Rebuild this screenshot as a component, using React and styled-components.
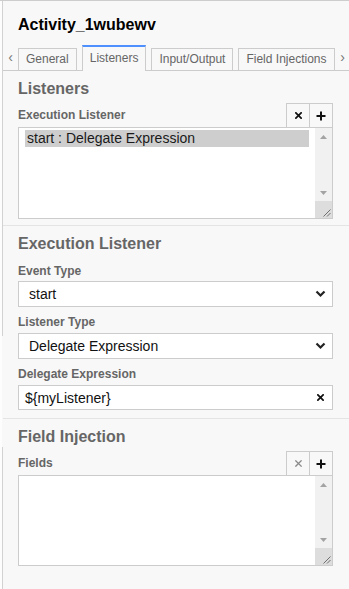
import styled, { createGlobalStyle } from "styled-components";

const GlobalStyle = createGlobalStyle`
  html, body {
    margin: 0;
    padding: 0;
    background: #f8f8f8;
  }
  body {
    font-family: "Liberation Sans", Arial, sans-serif;
  }
`;

const Page = styled.div`
  display: flex;
  width: 349px;
  height: 589px;
  border-top: 1px solid #cdcdcd;
  box-sizing: border-box;
  overflow: hidden;
`;

const Gutter = styled.div`
  flex: none;
  width: 3px;
  display: flex;
  flex-direction: column;
  background: #fdfdfd;
`;

const Rule = styled.div`
  height: ${(p) => (p.$size ? `${p.$size}px` : "auto")};
  flex: ${(p) => (p.$size ? "none" : 1)};
  border-right: 1px solid ${(p) => (p.$hidden ? "#f8f8f8" : "#d2d2d2")};
`;

const Panel = styled.div`
  flex: 1;
  min-width: 0;
  display: flex;
  flex-direction: column;
  background: #f8f8f8;
`;

const Title = styled.div`
  padding: 14px 0 0 15px;
  font-size: 16px;
  line-height: 20px;
  font-weight: bold;
  color: #000;
`;

const TabBar = styled.div`
  display: flex;
  align-items: flex-end;
  height: 26px;
  margin-top: 10px;
  box-sizing: border-box;
  border-bottom: 1px solid #cccccc;
`;

const Chevron = styled.span`
  flex: none;
  width: ${(p) => p.$width}px;
  align-self: center;
  text-align: center;
  font-size: 14px;
  line-height: 16px;
  color: #777;
  padding-bottom: 2px;
`;

const Tabs = styled.div`
  flex: none;
  display: flex;
  align-items: flex-end;
  gap: 5px;
`;

const Tab = styled.div`
  box-sizing: border-box;
  padding: 0 7px;
  font-size: 12px;
  color: #666;
  white-space: nowrap;
  border: 1px solid #cccccc;
  border-bottom: none;
  background: #f8f8f8;
  height: ${(p) => (p.$active ? "26px" : "22px")};
  line-height: ${(p) => (p.$active ? "22px" : "21px")};
  margin-bottom: ${(p) => (p.$active ? "-1px" : "0")};
  border-top: ${(p) => (p.$active ? "2px solid #4d90fe" : "1px solid #cccccc")};
  padding-bottom: ${(p) => (p.$active ? "2px" : "0")};
`;

const Section = styled.div`
  padding: 8px 16px 0 15px;
  border-bottom: ${(p) => (p.$last ? "none" : "1px solid #e4e4e4")};
  padding-bottom: ${(p) => p.$bottom}px;
`;

const Heading = styled.div`
  font-size: 16px;
  line-height: 20px;
  font-weight: bold;
  color: #666;
`;

const Label = styled.div`
  font-size: 12px;
  line-height: 15px;
  font-weight: bold;
  color: #666;
`;

const LabelRow = styled.div`
  display: flex;
  justify-content: space-between;
  align-items: flex-end;
  margin-top: 4px;
  ${Label} {
    padding-bottom: 4px;
  }
`;

const ButtonGroup = styled.div`
  display: flex;
`;

const IconButton = styled.div`
  width: 24px;
  height: 24px;
  box-sizing: border-box;
  border: 1px solid #cccccc;
  border-bottom: none;
  display: flex;
  align-items: center;
  justify-content: center;
  & + & {
    margin-left: -1px;
  }
`;

const ListBox = styled.div`
  display: flex;
  height: ${(p) => p.$height}px;
  box-sizing: border-box;
  border: 1px solid #cccccc;
  background: #fff;
`;

const Items = styled.div`
  flex: 1;
  padding: 2px 6px 0 6px;
`;

const Item = styled.div`
  padding-left: 2px;
  font-size: 14px;
  line-height: 17px;
  color: #1a1a1a;
  background: ${(p) => (p.$selected ? "#cecece" : "transparent")};
`;

const Scrollbar = styled.div`
  width: 17px;
  display: flex;
  flex-direction: column;
  background: #f1f1f1;
`;

const ScrollCell = styled.div`
  height: 17px;
  display: flex;
  align-items: center;
  justify-content: center;
  background: ${(p) => (p.$grip ? "#dddddd" : "transparent")};
`;

const Spacer = styled.div`
  flex: 1;
`;

const Field = styled.div`
  margin-top: ${(p) => p.$top}px;
  ${Label} {
    margin-bottom: ${(p) => p.$gap}px;
  }
`;

const SelectBox = styled.div`
  height: 26px;
  box-sizing: border-box;
  display: flex;
  align-items: center;
  justify-content: space-between;
  padding: 0 6px 0 10px;
  border: 1px solid #cccccc;
  background: #fff;
  font-size: 14px;
  color: #111;
`;

const TextInput = styled(SelectBox)`
  height: 25px;
  padding: 0 8px 0 6px;
`;

const CrossIcon = ({ size = 7, color = "#111", width = 2 }) => (
  <svg width={size} height={size} viewBox="0 0 8 8">
    <path d="M1 1 L7 7 M7 1 L1 7" stroke={color} strokeWidth={width} strokeLinecap="square" fill="none" />
  </svg>
);

const PlusIcon = () => (
  <svg width="10" height="10" viewBox="0 0 10 10">
    <path d="M5 0.5 V9.5 M0.5 5 H9.5" stroke="#111" strokeWidth="2" fill="none" />
  </svg>
);

const ChevronDown = () => (
  <svg width="11" height="8" viewBox="0 0 11 8">
    <path d="M1.5 1.5 L5.5 5.5 L9.5 1.5" stroke="#222" strokeWidth="2.2" fill="none" />
  </svg>
);

const Arrow = ({ up }) => (
  <svg width="7" height="4" viewBox="0 0 7 4">
    <path d={up ? "M0 4 L3.5 0 L7 4 Z" : "M0 0 L3.5 4 L7 0 Z"} fill="#a3a3a3" />
  </svg>
);

const Grip = () => (
  <svg width="17" height="17" viewBox="0 0 17 17">
    <path d="M15.5 8.5 L8.5 15.5 M15.5 12 L12 15.5" stroke="#6f6f6f" strokeWidth="1" fill="none" />
  </svg>
);

const List = ({ height, items }) => (
  <ListBox $height={height}>
    <Items>
      {items.map((item) => (
        <Item key={item} $selected>
          {item}
        </Item>
      ))}
    </Items>
    <Scrollbar>
      <ScrollCell>
        <Arrow up />
      </ScrollCell>
      <Spacer />
      <ScrollCell>
        <Arrow />
      </ScrollCell>
      <ScrollCell $grip>
        <Grip />
      </ScrollCell>
    </Scrollbar>
  </ListBox>
);

const ListHeader = ({ label, canRemove }) => (
  <LabelRow>
    <Label>{label}</Label>
    <ButtonGroup>
      <IconButton>
        {canRemove ? <CrossIcon /> : <CrossIcon color="#8a8a8a" width={1.6} />}
      </IconButton>
      <IconButton>
        <PlusIcon />
      </IconButton>
    </ButtonGroup>
  </LabelRow>
);

export default function App() {
  return (
    <>
      <GlobalStyle />
      <Page>
        <Gutter>
          <Rule $size={335} />
          <Rule $size={111} $hidden />
          <Rule />
        </Gutter>
        <Panel>
          <Title>Activity_1wubewv</Title>
          <TabBar>
            <Chevron $width={15}>‹</Chevron>
            <Tabs>
              <Tab>General</Tab>
              <Tab $active>Listeners</Tab>
              <Tab>Input/Output</Tab>
              <Tab>Field Injections</Tab>
            </Tabs>
            <Chevron $width={16}>›</Chevron>
          </TabBar>

          <Section $bottom={6}>
            <Heading>Listeners</Heading>
            <ListHeader label="Execution Listener" canRemove />
            <List height={92} items={["start : Delegate Expression"]} />
          </Section>

          <Section $bottom={8}>
            <Heading>Execution Listener</Heading>
            <Field $top={10} $gap={2}>
              <Label>Event Type</Label>
              <SelectBox>
                start
                <ChevronDown />
              </SelectBox>
            </Field>
            <Field $top={8} $gap={3}>
              <Label>Listener Type</Label>
              <SelectBox>
                Delegate Expression
                <ChevronDown />
              </SelectBox>
            </Field>
            <Field $top={8} $gap={3}>
              <Label>Delegate Expression</Label>
              <TextInput>
                {"${myListener}"}
                <CrossIcon size={7} />
              </TextInput>
            </Field>
          </Section>

          <Section $last $bottom={0}>
            <Heading>Field Injection</Heading>
            <ListHeader label="Fields" />
            <List height={91} items={[]} />
          </Section>
        </Panel>
      </Page>
    </>
  );
}
